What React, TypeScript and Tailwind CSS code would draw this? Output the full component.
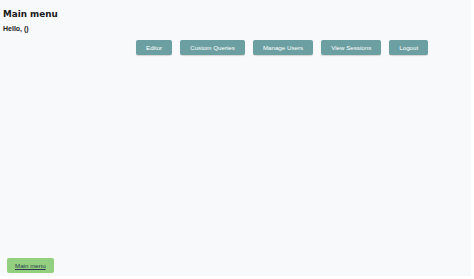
export default function App() {
  const links = ['Editor', 'Custom Queries', 'Manage Users', 'View Sessions', 'Logout']

  return (
    <div className="h-[279px] bg-white" style={{ fontFamily: '"Liberation Sans", Arial, sans-serif' }}>
      <div className="flex h-[276px] w-[471px] flex-col bg-[#f8f9fa] pl-[3px]">
        <h1
          className="mt-[9px] text-[8.8px] font-bold leading-[11px] text-[#1a1a1a]"
          style={{ fontFamily: '"DejaVu Sans", Verdana, sans-serif' }}
        >
          Main menu
        </h1>
        <p className="mt-[4px] text-[7px] font-bold leading-[9px] text-[#1a1a1a]">Hello, ()</p>

        {/* Nav buttons */}
        <div className="mt-[7px] flex gap-[8px] pl-[133px]">
          {links.map((label) => (
            <button
              key={label}
              className="h-[15px] whitespace-nowrap rounded-[2px] bg-[#6c9fa1] px-[10px] text-[6.2px] leading-[15px] text-white shadow-[0_1px_1px_rgba(0,0,0,0.15)]"
            >
              {label}
            </button>
          ))}
        </div>

        <div className="mt-auto mb-[1px] pl-[4px]">
          <button className="h-[15px] whitespace-nowrap rounded-[2px] bg-[#92d080] px-[8px] text-[6.2px] leading-[15px] text-[#2d3a4f] underline">
            Main menu
          </button>
        </div>
      </div>
    </div>
  )
}
